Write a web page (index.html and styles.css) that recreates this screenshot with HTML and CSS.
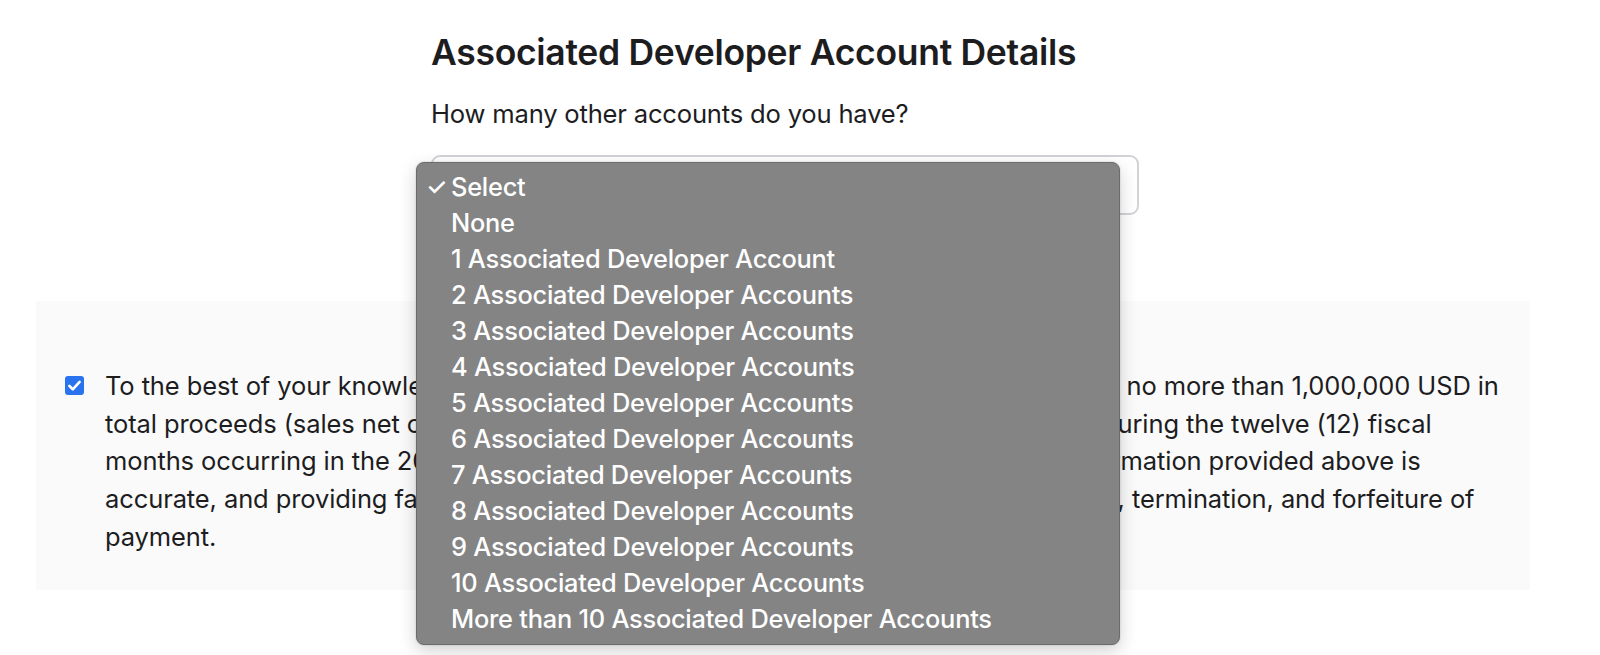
FILE: index.html
```html
<!DOCTYPE html>
<html lang="en">
<head>
<meta charset="utf-8">
<title>Associated Developer Account Details</title>
<link rel="stylesheet" href="styles.css">
</head>
<body>
<div class="page">
  <section class="details">
    <h2 class="title">Associated Developer Account Details</h2>
    <p class="question">How many other accounts do you have?</p>
    <div class="select-wrap">
      <div class="select-box"></div>
      <ul class="menu">
        <li class="item checked"><span class="check">✓</span>Select</li>
        <li class="item">None</li>
        <li class="item">1 Associated Developer Account</li>
        <li class="item">2 Associated Developer Accounts</li>
        <li class="item">3 Associated Developer Accounts</li>
        <li class="item">4 Associated Developer Accounts</li>
        <li class="item">5 Associated Developer Accounts</li>
        <li class="item">6 Associated Developer Accounts</li>
        <li class="item">7 Associated Developer Accounts</li>
        <li class="item">8 Associated Developer Accounts</li>
        <li class="item">9 Associated Developer Accounts</li>
        <li class="item">10 Associated Developer Accounts</li>
        <li class="item">More than 10 Associated Developer Accounts</li>
      </ul>
    </div>
  </section>
  <section class="confirm">
    <label class="confirm-row">
      <span class="checkbox"><svg viewBox="0 0 20 20" width="19" height="19"><path d="M4.6 10.4 L8.2 14 L15.4 6.2" fill="none" stroke="#fff" stroke-width="2.8" stroke-linecap="round" stroke-linejoin="round"/></svg></span>
      <span class="confirm-text">To the best of your knowledge, you and your Associated Developer Accounts earned no more than 1,000,000 USD in<br>total proceeds (sales net of Apple's commission, less taxes and other adjustments) during the twelve (12) fiscal<br>months occurring in the 2020 calendar year. You represent and confirm that the information provided above is<br>accurate, and providing false information may result in the removal from the program, termination, and forfeiture of<br>payment.</span>
    </label>
  </section>
</div>
</body>
</html>
```
FILE: styles.css
```css
html, body {
  margin: 0;
  padding: 0;
  background: #ffffff;
}
body {
  font-family: Inter, "Noto Sans", "Liberation Sans", sans-serif;
  color: #1d1d1f;
  width: 1600px;
  height: 655px;
  overflow: hidden;
}
.page {
  display: flex;
  flex-direction: column;
}
.details {
  padding-left: 431px;
  padding-top: 33px;
}
.title {
  margin: 0;
  font-size: 35.5px;
  line-height: 40px;
  font-weight: 600;
  letter-spacing: -0.3px;
}
.question {
  margin: 25px 0 0 0;
  font-size: 25.6px;
  line-height: 32px;
  font-weight: 400;
  letter-spacing: -0.2px;
}
.select-wrap {
  position: relative;
  margin-top: 25px;
  width: 708px;
}
.select-box {
  height: 56px;
  border: 2px solid #d2d2d7;
  border-radius: 9px;
  background: #fff;
}
.menu {
  position: absolute;
  left: -15px;
  top: 7px;
  width: 704px;
  height: 483px;
  margin: 0;
  padding: 6px 0 0 0;
  box-sizing: border-box;
  list-style: none;
  background: #848484;
  border: 1px solid #6c6c6c;
  border-radius: 8px;
  box-shadow: 0 6px 18px rgba(0,0,0,0.18), 0 0 2px rgba(0,0,0,0.2);
  z-index: 5;
}
.item {
  position: relative;
  height: 36px;
  line-height: 36px;
  padding-left: 34px;
  color: #ffffff;
  font-size: 25.4px;
  font-weight: 500;
  letter-spacing: -0.25px;
  white-space: nowrap;
}
.check {
  position: absolute;
  left: 9px;
  top: 0;
  font-size: 24px;
  font-weight: 500;
}
.confirm {
  margin: 86px 0 0 36px;
  width: 1494px;
  height: 289px;
  background: #fafafa;
  box-sizing: border-box;
  padding: 66px 0 0 29px;
}
.confirm-row {
  display: flex;
  align-items: flex-start;
  gap: 21px;
}
.checkbox {
  flex: none;
  width: 19px;
  height: 19px;
  margin-top: 9px;
  background: #2a73ee;
  border-radius: 3px;
  display: flex;
  align-items: center;
  justify-content: center;
}
.checkbox svg {
  display: block;
}
.confirm-text {
  font-size: 25.5px;
  line-height: 37.7px;
  letter-spacing: -0.1px;
  white-space: nowrap;
}
```
